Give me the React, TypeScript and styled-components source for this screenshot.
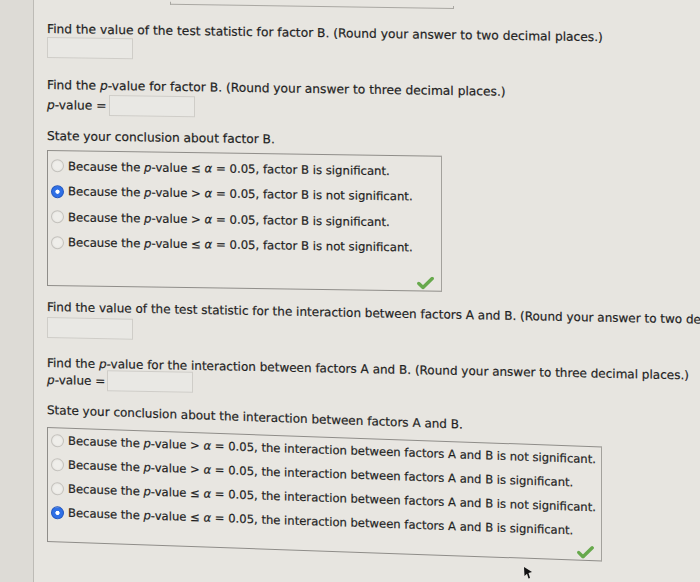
import styled, { createGlobalStyle } from 'styled-components';

const GlobalStyle = createGlobalStyle`
  html, body {
    margin: 0;
    padding: 0;
    background: #e6e4df;
  }
  body {
    font-family: 'DejaVu Sans', Verdana, sans-serif;
    color: #1f1f1f;
  }
`;

interface Option {
  text: React.ReactNode;
  selected?: boolean;
}

const pv = (
  <>
    <i>p</i>-value
  </>
);

const factorOptions: Option[] = [
  { text: <>Because the {pv} ≤ <i>α</i> = 0.05, factor B is significant.</> },
  { text: <>Because the {pv} &gt; <i>α</i> = 0.05, factor B is not significant.</>, selected: true },
  { text: <>Because the {pv} &gt; <i>α</i> = 0.05, factor B is significant.</> },
  { text: <>Because the {pv} ≤ <i>α</i> = 0.05, factor B is not significant.</> },
];

const interactionOptions: Option[] = [
  {
    text: (
      <>
        Because the {pv} &gt; <i>α</i> = 0.05, the interaction between factors A and B is not significant.
      </>
    ),
  },
  {
    text: (
      <>
        Because the {pv} &gt; <i>α</i> = 0.05, the interaction between factors A and B is significant.
      </>
    ),
  },
  {
    text: (
      <>
        Because the {pv} ≤ <i>α</i> = 0.05, the interaction between factors A and B is not significant.
      </>
    ),
  },
  {
    text: (
      <>
        Because the {pv} ≤ <i>α</i> = 0.05, the interaction between factors A and B is significant.
      </>
    ),
    selected: true,
  },
];

const Check = () => (
  <svg width="17" height="13" viewBox="0 0 17 13">
    <path d="M1.8 7 L6 11 L15.2 1.8" fill="none" stroke="#67a94c" strokeWidth="3.4" strokeLinecap="round" strokeLinejoin="round" />
  </svg>
);

const Cursor = () => (
  <svg width="12" height="14" viewBox="0 0 12 14">
    <path d="M2 1 L10 6 L6.5 7 L8 12 L6.5 12.5 L5 7.8 L2.5 10 Z" fill="#111" />
  </svg>
);

interface ChoicesProps {
  options: Option[];
  width: number;
  rowHeight: number;
  padTop: number;
  bottom: number;
  fontSize: number;
}

const Choices = ({ options, width, rowHeight, padTop, bottom, fontSize }: ChoicesProps) => (
  <ChoiceBox $width={width} $padTop={padTop} $fontSize={fontSize}>
    {options.map((o, i) => (
      <ChoiceRow key={i} $height={rowHeight}>
        <Radio $selected={o.selected} />
        <span>{o.text}</span>
      </ChoiceRow>
    ))}
    <CheckRow $height={bottom}>
      <Check />
    </CheckRow>
  </ChoiceBox>
);

// the photo is taken at an angle, so each band leans a little more than the one above
const App = () => {
  return (
    <>
      <GlobalStyle />
      <Page>
        <Gutter />
        <Content>
          <Part $skew={0.85} $fontSize={12.25}>
            <PrevAnswer />
            <Prompt $top={18}>Find the value of the test statistic for factor B. (Round your answer to two decimal places.)</Prompt>
            <AnswerBox />
            <Prompt $top={19}>
              Find the <i>p</i>-value for factor B. (Round your answer to three decimal places.)
            </Prompt>
            <AnswerRow $labelWidth={62} $top={0}>
              <span>{pv} =</span>
              <AnswerBox />
            </AnswerRow>
            <Prompt $top={13}>State your conclusion about factor B.</Prompt>
            <Gap $h={6} />
            <Choices options={factorOptions} width={395} rowHeight={25.5} padTop={2} bottom={30} fontSize={11.7} />
          </Part>

          <Part $skew={1.1} $fontSize={12}>
            <Prompt $top={13}>
              Find the value of the test statistic for the interaction between factors A and B. (Round your answer to two decimal places.)
            </Prompt>
            <Gap $h={2} />
            <AnswerBox />
            <Prompt $top={17}>
              Find the <i>p</i>-value for the interaction between factors A and B. (Round your answer to three decimal places.)
            </Prompt>
            <AnswerRow $labelWidth={60} $top={-3}>
              <span>{pv} =</span>
              <AnswerBox />
            </AnswerRow>
          </Part>

          <Part $skew={2} $fontSize={12}>
            <Prompt $top={12}>State your conclusion about the interaction between factors A and B.</Prompt>
            <Gap $h={9} />
            <Choices options={interactionOptions} width={555} rowHeight={24} padTop={0} bottom={17} fontSize={11.6} />
          </Part>
        </Content>
        <Pointer>
          <Cursor />
        </Pointer>
      </Page>
    </>
  );
};

export default App;

const Page = styled.div`
  position: relative;
  display: flex;
  width: 700px;
  height: 582px;
  overflow: hidden;
  background: #e7e5e0;
`;

const Gutter = styled.div`
  width: 33px;
  flex-shrink: 0;
  background: #dddbd6;
  border-right: 1px solid #bdbbb6;
`;

const Content = styled.div`
  flex: 1;
  min-width: 0;
  padding-left: 13px;
  white-space: nowrap;
  -webkit-text-stroke: 0.2px #1f1f1f;
`;

const Part = styled.div<{ $skew: number; $fontSize: number }>`
  font-size: ${(p) => p.$fontSize}px;
  transform: skewY(${(p) => p.$skew}deg);
  transform-origin: 0 0;
`;

const PrevAnswer = styled.div`
  margin-left: 123px;
  width: 282px;
  height: 2px;
  border: 1px solid #a9a7a2;
  border-top: none;
`;

const Prompt = styled.div<{ $top: number }>`
  margin-top: ${(p) => p.$top}px;
  line-height: 16px;
  height: 16px;
`;

const Gap = styled.div<{ $h: number }>`
  height: ${(p) => p.$h}px;
`;

const AnswerBox = styled.div`
  width: 86px;
  height: 21px;
  border: 1px solid #cfcdc8;
  background: #e9e8e4;
  box-sizing: border-box;
`;

const AnswerRow = styled.div<{ $labelWidth: number; $top: number }>`
  display: flex;
  align-items: center;
  height: 22px;
  margin-top: ${(p) => p.$top}px;

  & > span {
    width: ${(p) => p.$labelWidth}px;
    padding-top: 2px;
  }
`;

const ChoiceBox = styled.div<{ $width: number; $padTop: number; $fontSize: number }>`
  width: ${(p) => p.$width}px;
  border: 1px solid #8f8d89;
  border-right-color: #a3a19c;
  box-sizing: border-box;
  padding: ${(p) => p.$padTop}px 0 0 3px;
  background: #e8e6e1;
  font-size: ${(p) => p.$fontSize}px;
`;

const ChoiceRow = styled.div<{ $height: number }>`
  display: flex;
  align-items: center;
  gap: 4px;
  height: ${(p) => p.$height}px;
`;

const Radio = styled.span<{ $selected?: boolean }>`
  width: 13px;
  height: 13px;
  border-radius: 50%;
  flex-shrink: 0;
  box-sizing: border-box;
  border: 1px solid ${(p) => (p.$selected ? '#1f55c0' : '#c4c2bd')};
  background: ${(p) =>
    p.$selected
      ? 'radial-gradient(circle, #ffffff 0 1.8px, #2f70e6 2.4px)'
      : 'radial-gradient(circle, #efeeea 0 45%, #dfddd8 100%)'};
`;

const CheckRow = styled.div<{ $height: number }>`
  display: flex;
  justify-content: flex-end;
  align-items: flex-end;
  height: ${(p) => p.$height}px;
  padding: 0 7px 1px 0;
  box-sizing: border-box;
`;

const Pointer = styled.div`
  position: absolute;
  left: 522px;
  top: 565px;
`;
